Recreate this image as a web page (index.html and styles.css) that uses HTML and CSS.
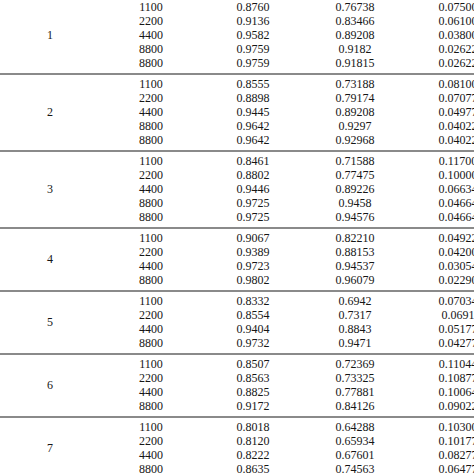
FILE: index.html
```html
<!DOCTYPE html>
<html>
<head>
<meta charset="utf-8">
<link rel="stylesheet" href="styles.css">
</head>
<body>
<div class="table">
  <div class="group">
    <div class="label">1</div>
    <div class="rows">
      <div class="row"><span>1100</span><span>0.8760</span><span>0.76738</span><span>0.07500</span></div>
      <div class="row"><span>2200</span><span>0.9136</span><span>0.83466</span><span>0.06100</span></div>
      <div class="row"><span>4400</span><span>0.9582</span><span>0.89208</span><span>0.03800</span></div>
      <div class="row"><span>8800</span><span>0.9759</span><span>0.9182</span><span>0.02622</span></div>
      <div class="row"><span>8800</span><span>0.9759</span><span>0.91815</span><span>0.02622</span></div>
    </div>
  </div>
  <div class="group">
    <div class="label">2</div>
    <div class="rows">
      <div class="row"><span>1100</span><span>0.8555</span><span>0.73188</span><span>0.08100</span></div>
      <div class="row"><span>2200</span><span>0.8898</span><span>0.79174</span><span>0.07077</span></div>
      <div class="row"><span>4400</span><span>0.9445</span><span>0.89208</span><span>0.04977</span></div>
      <div class="row"><span>8800</span><span>0.9642</span><span>0.9297</span><span>0.04022</span></div>
      <div class="row"><span>8800</span><span>0.9642</span><span>0.92968</span><span>0.04022</span></div>
    </div>
  </div>
  <div class="group">
    <div class="label">3</div>
    <div class="rows">
      <div class="row"><span>1100</span><span>0.8461</span><span>0.71588</span><span>0.11700</span></div>
      <div class="row"><span>2200</span><span>0.8802</span><span>0.77475</span><span>0.10000</span></div>
      <div class="row"><span>4400</span><span>0.9446</span><span>0.89226</span><span>0.06634</span></div>
      <div class="row"><span>8800</span><span>0.9725</span><span>0.9458</span><span>0.04664</span></div>
      <div class="row"><span>8800</span><span>0.9725</span><span>0.94576</span><span>0.04664</span></div>
    </div>
  </div>
  <div class="group">
    <div class="label">4</div>
    <div class="rows">
      <div class="row"><span>1100</span><span>0.9067</span><span>0.82210</span><span>0.04922</span></div>
      <div class="row"><span>2200</span><span>0.9389</span><span>0.88153</span><span>0.04200</span></div>
      <div class="row"><span>4400</span><span>0.9723</span><span>0.94537</span><span>0.03054</span></div>
      <div class="row"><span>8800</span><span>0.9802</span><span>0.96079</span><span>0.02290</span></div>
    </div>
  </div>
  <div class="group">
    <div class="label">5</div>
    <div class="rows">
      <div class="row"><span>1100</span><span>0.8332</span><span>0.6942</span><span>0.07034</span></div>
      <div class="row"><span>2200</span><span>0.8554</span><span>0.7317</span><span>0.0691</span></div>
      <div class="row"><span>4400</span><span>0.9404</span><span>0.8843</span><span>0.05177</span></div>
      <div class="row"><span>8800</span><span>0.9732</span><span>0.9471</span><span>0.04277</span></div>
    </div>
  </div>
  <div class="group">
    <div class="label">6</div>
    <div class="rows">
      <div class="row"><span>1100</span><span>0.8507</span><span>0.72369</span><span>0.11044</span></div>
      <div class="row"><span>2200</span><span>0.8563</span><span>0.73325</span><span>0.10877</span></div>
      <div class="row"><span>4400</span><span>0.8825</span><span>0.77881</span><span>0.10064</span></div>
      <div class="row"><span>8800</span><span>0.9172</span><span>0.84126</span><span>0.09022</span></div>
    </div>
  </div>
  <div class="group">
    <div class="label">7</div>
    <div class="rows">
      <div class="row"><span>1100</span><span>0.8018</span><span>0.64288</span><span>0.10300</span></div>
      <div class="row"><span>2200</span><span>0.8120</span><span>0.65934</span><span>0.10177</span></div>
      <div class="row"><span>4400</span><span>0.8222</span><span>0.67601</span><span>0.08277</span></div>
      <div class="row"><span>8800</span><span>0.8635</span><span>0.74563</span><span>0.06477</span></div>
    </div>
  </div>
</div>
</body>
</html>
```

FILE: styles.css
```css
html, body {
  margin: 0;
  padding: 0;
  background: #ffffff;
  overflow: hidden;
  width: 474px;
  height: 474px;
}

.table {
  margin-top: -2px;
  width: 510px;
  font-family: "Liberation Serif", "Times New Roman", serif;
  font-size: 12px;
  line-height: 14px;
  color: #161616;
}

.group {
  display: grid;
  grid-template-columns: 100px 1fr;
  padding: 2px 0 3px;
  border-bottom: 2px solid #8a8a8a;
}

.label {
  display: flex;
  align-items: center;
  justify-content: center;
}

.rows {
  display: flex;
  flex-direction: column;
}

.row {
  display: grid;
  grid-template-columns: 102px 102px 102px 104px;
  height: 14px;
  white-space: nowrap;
}

.row span {
  text-align: center;
}
```
